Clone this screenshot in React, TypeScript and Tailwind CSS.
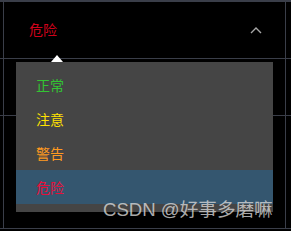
import React from 'react';

const options = [
  { label: '正常', color: 'text-[#33c433]' },
  { label: '注意', color: 'text-[#ffe100]' },
  { label: '警告', color: 'text-[#ff9a1f]' },
  { label: '危险', color: 'text-[#e8103a]' },
];

function Row({ h, children }: { h: string; children?: React.ReactNode }) {
  return (
    <div className={`flex ${h} border-b border-[#3a3e49]`}>
      <div className="w-[4px] border-r border-[#3a3e49]" />
      <div className="flex-1 flex items-center">{children}</div>
      <div className="w-[6px] border-l border-[#3a3e49]" />
    </div>
  );
}

export default function App() {
  const selected = '危险';
  return (
    <div
      className="relative w-[291px] h-[231px] bg-black overflow-hidden"
      style={{ fontFamily: '"Noto Sans CJK SC", "Noto Sans", sans-serif' }}
    >
      <div className="border-t-2 border-[#3a3e49]">
        <Row h="h-[57px]">
          <div className="flex flex-1 items-center justify-between pl-[25px] pr-[23px] pb-[1px]">
            <span className="text-[14px] text-[#d0021b]">{selected}</span>
            <svg width="12" height="8" viewBox="0 0 12 8" fill="none">
              <path d="M1 7 L6 2 L11 7" stroke="#a8a8a8" strokeWidth="1.4" />
            </svg>
          </div>
        </Row>
        <Row h="h-[57px]" />
        <Row h="h-[113px]" />
      </div>

      {/* caret */}
      <div className="absolute left-[51px] top-[55px] w-0 h-0 border-x-[6px] border-x-transparent border-b-[7px] border-b-white" />

      {/* dropdown */}
      <div className="absolute left-[16px] top-[62px] w-[257px] h-[150px] bg-[#454545] pt-[6px]">
        {options.map((o) => (
          <div
            key={o.label}
            className={`h-[34px] flex items-center pl-[20px] text-[14px] ${o.color} ${
              o.label === selected ? 'bg-[#34566f]' : ''
            }`}
          >
            {o.label}
          </div>
        ))}
      </div>

      {/* watermark */}
      <div
        className="absolute left-[103px] top-[198px] text-[18.6px] leading-[24px] text-[#d8d8d8]/80 whitespace-nowrap"
        style={{ fontFamily: '"Liberation Sans", "Noto Sans CJK SC", sans-serif' }}
      >
        CSDN @好事多磨嘛
      </div>
    </div>
  );
}
